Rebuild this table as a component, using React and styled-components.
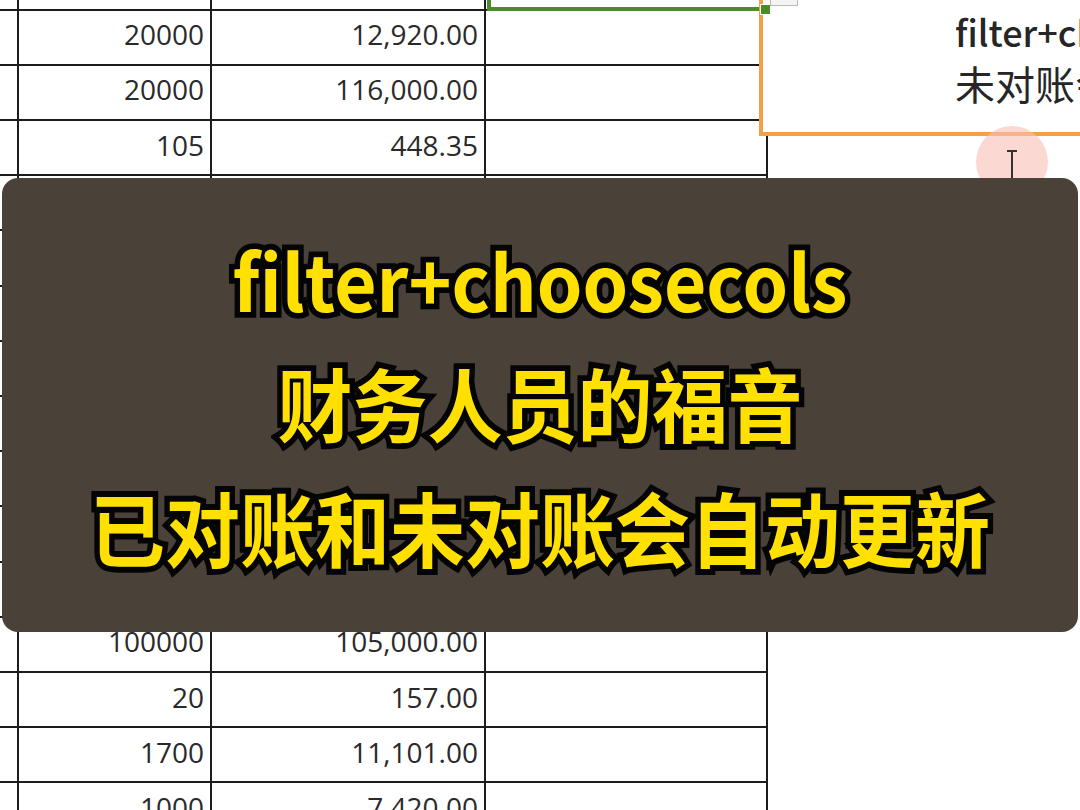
import React from 'react';
import styled, { createGlobalStyle } from 'styled-components';

const GlobalStyle = createGlobalStyle`
    html, body {
        margin: 0;
        padding: 0;
        background: #fff;
    }
    body {
        width: 1080px;
        height: 810px;
        overflow: hidden;
    }
`;

const Page = styled.div`
    position: relative;
    width: 1080px;
    height: 810px;
    overflow: hidden;
    background: #fff;
`;

const Sheet = styled.div`
    display: grid;
    grid-template-columns: 19px 193px 274px 282px;
    grid-auto-rows: 55.2px;
    margin-top: -44.5px;
`;

const Cell = styled.div`
    display: flex;
    align-items: center;
    justify-content: flex-end;
    box-sizing: border-box;
    padding: 0 6px 6px 0;
    border-right: 2px solid #1c1c1c;
    border-bottom: 2px solid #1c1c1c;
    font-family: "Open Sans", "Noto Sans", sans-serif;
    font-size: 28px;
    color: #2a2a2a;
    white-space: nowrap;
    position: relative;
    ${p => p.selected && `
        &::after {
            content: '';
            position: absolute;
            left: 1px;
            right: 2px;
            top: 0;
            bottom: -2px;
            border: 4px solid #4a8c2c;
        }
    `}
`;

const FillHandle = styled.span`
    position: absolute;
    right: -5px;
    bottom: -6px;
    width: 9px;
    height: 9px;
    background: #4a8c2c;
    border: 1px solid #fff;
    z-index: 2;
`;

const OptionsButton = styled.span`
    position: absolute;
    right: -32px;
    bottom: 3px;
    width: 26px;
    height: 10px;
    background: #f4f4f4;
    border: 1px solid #b9b9b9;
    z-index: 2;
`;

const NoteBox = styled.div`
    position: absolute;
    left: 759px;
    top: -20px;
    width: 400px;
    height: 156px;
    box-sizing: border-box;
    border: 4px solid #f3a04b;
    background: #fff;
    padding: 22px 0 0 192px;
    font-family: "Noto Sans CJK SC", "Noto Sans", sans-serif;
    color: #262626;
`;

const NoteLine = styled.div`
    font-size: ${p => p.size}px;
    font-weight: ${p => p.weight || 400};
    line-height: ${p => p.lh}px;
    white-space: nowrap;
`;

const CursorHalo = styled.div`
    position: absolute;
    left: 976px;
    top: 126px;
    width: 72px;
    height: 72px;
    border-radius: 50%;
    background: rgba(250, 190, 180, 0.6);
    display: flex;
    justify-content: center;
    padding-top: 24px;
    box-sizing: border-box;
`;

const IBeam = styled.div`
    width: 2px;
    height: 30px;
    background: #333;
    position: relative;
    &::before, &::after {
        content: '';
        position: absolute;
        left: -4px;
        width: 10px;
        height: 2px;
        background: #333;
    }
    &::before { top: 0; }
    &::after { bottom: 0; }
`;

const Banner = styled.div`
    position: absolute;
    left: 2px;
    top: 178px;
    width: 1076px;
    height: 454px;
    border-radius: 16px;
    background: #4a4239;
    display: flex;
    flex-direction: column;
    align-items: center;
    justify-content: center;
    padding-bottom: 6px;
    box-sizing: border-box;
`;

const Caption = styled.div`
    font-family: "Noto Sans CJK SC", "Noto Sans", sans-serif;
    font-weight: 700;
    font-size: ${p => p.size}px;
    line-height: ${p => p.lh}px;
    color: #ffe000;
    -webkit-text-stroke: 11px #050505;
    paint-order: stroke fill;
    text-shadow: 2px 3px 2px rgba(0, 0, 0, 0.6);
    white-space: nowrap;
    transform: scaleY(${p => p.stretch || 1});
`;

const rows = [
    ['', ''],
    ['20000', '12,920.00'],
    ['20000', '116,000.00'],
    ['105', '448.35'],
    ['3000', '25,800.00'],
    ['500', '4,250.00'],
    ['12000', '86,400.00'],
    ['800', '6,960.00'],
    ['60', '522.00'],
    ['15000', '97,500.00'],
    ['2400', '18,720.00'],
    ['350', '2,835.00'],
    ['100000', '105,000.00'],
    ['20', '157.00'],
    ['1700', '11,101.00'],
    ['1000', '7,420.00'],
];

function App() {
    return (
        <>
            <GlobalStyle />
            <Page>
                <Sheet>
                    {rows.map(([qty, amount], i) => (
                        <React.Fragment key={i}>
                            <Cell />
                            <Cell>{qty}</Cell>
                            <Cell>{amount}</Cell>
                            <Cell selected={i === 0}>
                                {i === 0 && <><FillHandle /><OptionsButton /></>}
                            </Cell>
                        </React.Fragment>
                    ))}
                </Sheet>

                <NoteBox>
                    <NoteLine size={36} weight={500} lh={50}>filter+choosecols</NoteLine>
                    <NoteLine size={40} lh={54}>未对账会自动更新</NoteLine>
                </NoteBox>

                <CursorHalo>
                    <IBeam />
                </CursorHalo>

                <Banner>
                    <Caption size={73} lh={124} stretch={1.06}>filter+choosecols</Caption>
                    <Caption size={75} lh={124} stretch={1.06}>财务人员的福音</Caption>
                    <Caption size={75} lh={124} stretch={1.08}>已对账和未对账会自动更新</Caption>
                </Banner>
            </Page>
        </>
    );
}

export default App;
